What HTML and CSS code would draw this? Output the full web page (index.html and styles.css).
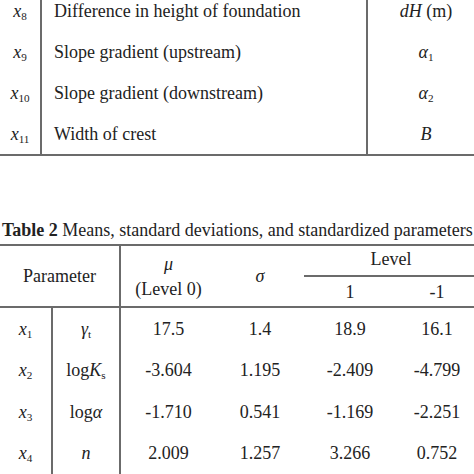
FILE: index.html
```html
<!DOCTYPE html>
<html>
<head>
<meta charset="utf-8">
<link rel="stylesheet" href="styles.css">
</head>
<body>
<div class="page">
  <table class="t1">
    <colgroup><col class="c1a"><col class="c1b"><col class="c1c"></colgroup>
    <tr><td class="var"><i>x</i><sub>8</sub></td><td class="desc">Difference in height of foundation</td><td class="sym"><i>dH</i> (m)</td></tr>
    <tr><td class="var"><i>x</i><sub>9</sub></td><td class="desc">Slope gradient (upstream)</td><td class="sym"><i>α</i><sub>1</sub></td></tr>
    <tr><td class="var"><i>x</i><sub>10</sub></td><td class="desc">Slope gradient (downstream)</td><td class="sym"><i>α</i><sub>2</sub></td></tr>
    <tr><td class="var"><i>x</i><sub>11</sub></td><td class="desc">Width of crest</td><td class="sym"><i>B</i></td></tr>
  </table>

  <p class="caption"><b>Table 2</b> Means, standard deviations, and standardized parameters</p>

  <table class="t2">
    <colgroup><col class="k1"><col class="k2"><col class="k3"><col class="k4"><col class="k5"><col class="k6"></colgroup>
    <tr class="h1">
      <td colspan="2" rowspan="2" class="param">Parameter</td>
      <td rowspan="2" class="mu"><div class="sym-top"><i>μ</i></div><div>(Level 0)</div></td>
      <td rowspan="2" class="sg"><i>σ</i></td>
      <td colspan="2" class="level">Level</td>
    </tr>
    <tr class="h2"><td>1</td><td>-1</td></tr>
    <tr class="r"><td class="v"><i>x</i><sub>1</sub></td><td class="s"><i>γ</i><sub>t</sub></td><td>17.5</td><td>1.4</td><td>18.9</td><td>16.1</td></tr>
    <tr class="r"><td class="v"><i>x</i><sub>2</sub></td><td class="s">log<i>K</i><sub>s</sub></td><td>-3.604</td><td>1.195</td><td>-2.409</td><td>-4.799</td></tr>
    <tr class="r"><td class="v"><i>x</i><sub>3</sub></td><td class="s">log<i>α</i></td><td>-1.710</td><td>0.541</td><td>-1.169</td><td>-2.251</td></tr>
    <tr class="r"><td class="v"><i>x</i><sub>4</sub></td><td class="s"><i>n</i></td><td>2.009</td><td>1.257</td><td>3.266</td><td>0.752</td></tr>
  </table>
</div>
</body>
</html>
```

FILE: styles.css
```css
html, body {
  margin: 0;
  padding: 0;
  background: #fff;
  overflow: hidden;
}
body {
  width: 474px;
  height: 474px;
  font-family: "Liberation Serif", "Times New Roman", serif;
  color: #222;
  font-size: 18px;
}
.page {
  width: 484px;
}
table {
  border-collapse: collapse;
  table-layout: fixed;
}
td {
  padding: 0;
  line-height: 1;
}
sub {
  font-size: 0.62em;
  vertical-align: -0.25em;
  line-height: 0;
}
i {
  font-style: italic;
}

/* Table 1 */
.t1 {
  width: 484px;
  margin-top: -10px;
  border-bottom: 2px solid #6b6b6b;
}
.c1a { width: 41px; }
.c1b { width: 326px; }
.c1c { width: 117px; }
.t1 td {
  height: 41px;
}
.t1 .var {
  text-align: center;
  border-right: 2px solid #6b6b6b;
}
.t1 .desc {
  padding-left: 12px;
  border-right: 2px solid #6b6b6b;
}
.t1 .sym {
  text-align: center;
}

.caption {
  margin: 64px 0 0 2px;
  font-size: 18px;
  line-height: 20px;
  white-space: nowrap;
}

/* Table 2 */
.t2 {
  width: 478px;
  margin-top: 4px;
  border-top: 2px solid #6b6b6b;
}
.k1 { width: 52px; }
.k2 { width: 68px; }
.k3 { width: 96px; }
.k4 { width: 88px; }
.k5 { width: 92px; }
.k6 { width: 82px; }
.t2 td {
  text-align: center;
}
.t2 .h1 td {
  height: 29px;
}
.t2 .param,
.t2 .mu,
.t2 .sg {
  border-bottom: 2px solid #6b6b6b;
}
.t2 .param {
  border-right: 2px solid #6b6b6b;
}
.t2 .mu .sym-top {
  margin-bottom: 7px;
}
.t2 .h1 td.level {
  border-bottom: 2px solid #6b6b6b;
  vertical-align: top;
  padding-top: 4px;
  height: 25px;
}
.t2 .h2 td {
  height: 29px;
  border-bottom: 2px solid #6b6b6b;
}
.t2 .r td {
  height: 41.5px;
}
.t2 .r td.v,
.t2 .r td.s {
  border-right: 2px solid #6b6b6b;
}
```
